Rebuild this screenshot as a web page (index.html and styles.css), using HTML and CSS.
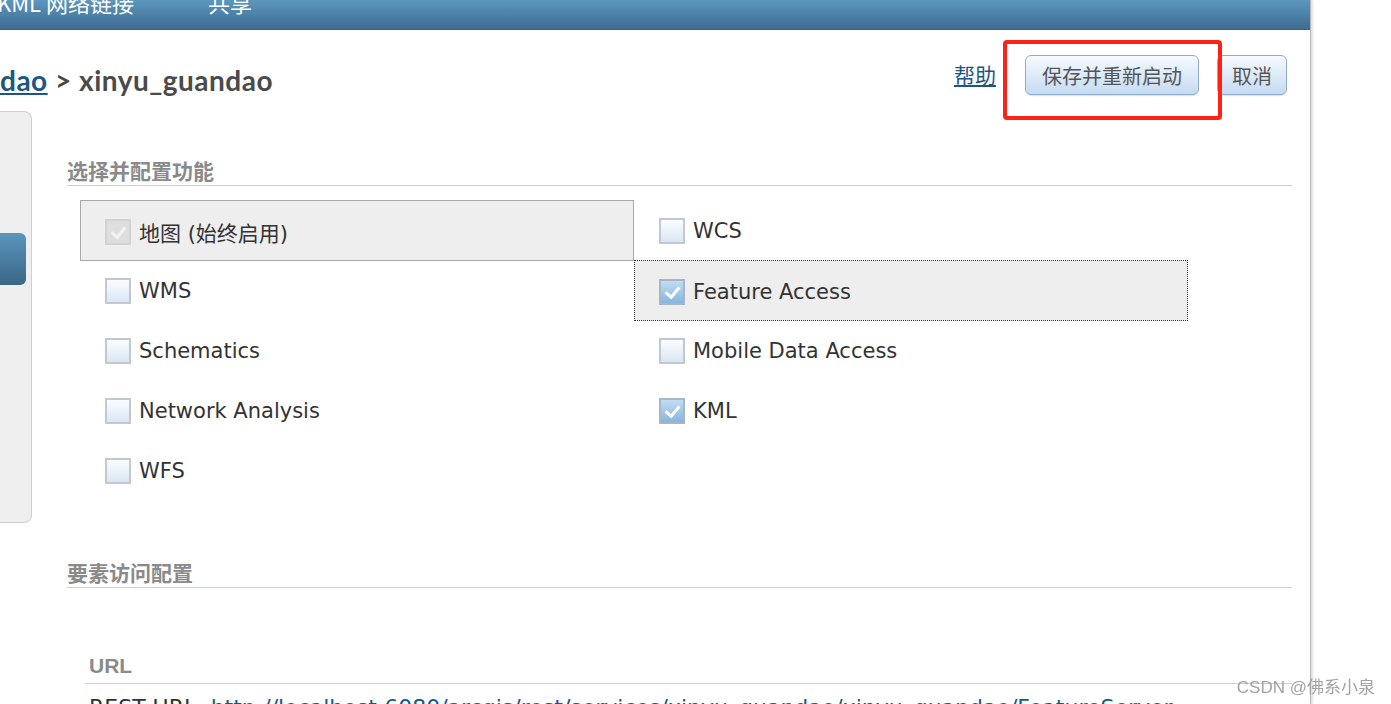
FILE: index.html
```html
<!DOCTYPE html>
<html lang="zh-CN">
<head>
  <meta charset="UTF-8" />
  <title>xinyu_guandao - 功能</title>
  <meta name="viewport" content="width=device-width, initial-scale=1.0" />
  <link rel="stylesheet" href="styles.css">
</head>
<body>
  <div class="page">
    <div class="topbar">
      <a href="#" class="tab">KML 网络链接</a>
      <a href="#" class="tab">共享</a>
    </div>

    <div class="titlebar">
      <h1 class="crumbs"><a href="#">dao</a> &gt; xinyu_guandao</h1>
      <div class="actions">
        <a href="#" class="help">帮助</a>
        <span class="save-wrap">
          <button class="btn">保存并重新启动</button>
          <span class="mark"></span>
        </span>
        <button class="btn">取消</button>
      </div>
    </div>

    <div class="body">
      <div class="sidebar">
        <div class="side-tab"></div>
      </div>

      <div class="content">
        <h3 class="section-title">选择并配置功能</h3>
        <div class="features">
          <label class="cell locked"><input type="checkbox" checked disabled> 地图 (始终启用)</label>
          <label class="cell"><input type="checkbox"> WCS</label>
          <label class="cell"><input type="checkbox"> WMS</label>
          <label class="cell focused"><input type="checkbox" checked> Feature Access</label>
          <label class="cell"><input type="checkbox"> Schematics</label>
          <label class="cell"><input type="checkbox"> Mobile Data Access</label>
          <label class="cell"><input type="checkbox"> Network Analysis</label>
          <label class="cell"><input type="checkbox" checked> KML</label>
          <label class="cell"><input type="checkbox"> WFS</label>
        </div>

        <h3 class="section-title second">要素访问配置</h3>

        <div class="url-block">
          <h4>URL</h4>
          <p>REST URL: <a href="#">http://localhost:6080/arcgis/rest/services/xinyu_guandao/xinyu_guandao/FeatureServer</a></p>
        </div>
      </div>
    </div>
  </div>

  <div class="watermark">CSDN @佛系小泉</div>
</body>
</html>
```

FILE: styles.css
```css
* {
  box-sizing: border-box;
  margin: 0;
  padding: 0;
}

body {
  background: #fff;
  font-family: "DejaVu Sans", "Noto Sans CJK SC", sans-serif;
  color: #333;
  height: 704px;
  overflow: hidden;
}

.page {
  width: 1311px;
  height: 704px;
  border-right: 1px solid #b4b4b4;
  box-shadow: 2px 0 2px #e2e2e2;
  overflow: hidden;
}

/* top navigation bar */
.topbar {
  height: 30px;
  background: linear-gradient(to bottom, #5c96bd, #3f6c90);
  border-bottom: 1px solid #365f80;
  display: flex;
  gap: 74px;
  overflow: hidden;
}

.topbar .tab {
  color: #fff;
  text-decoration: none;
  font-family: "Noto Sans CJK SC", sans-serif;
  font-size: 22px;
  line-height: 22px;
  margin-top: -9px;
}

.topbar .tab:first-child {
  margin-left: -3px;
}

/* title + buttons */
.titlebar {
  height: 81px;
  display: flex;
  justify-content: space-between;
  align-items: flex-start;
  padding-right: 23px;
}

.crumbs {
  font-family: Lato, "Noto Sans CJK SC", sans-serif;
  font-weight: 700;
  font-size: 28px;
  color: #4a4a4a;
  margin-top: 33px;
  line-height: 34px;
  letter-spacing: 0.5px;
}

.crumbs a {
  color: #1c5684;
}

.actions {
  display: flex;
  align-items: center;
  margin-top: 25px;
}

.help {
  font-family: "Noto Sans CJK SC", sans-serif;
  font-size: 21px;
  color: #1c5684;
  margin-right: 29px;
  margin-top: -2px;
}

.save-wrap {
  position: relative;
  margin-right: 18px;
}

.btn {
  height: 40px;
  padding: 0 14px;
  font-family: "Noto Sans CJK SC", sans-serif;
  font-size: 20px;
  color: #555;
  background: linear-gradient(to bottom, #f6faff, #c5dbf2);
  border: 1px solid #8eadcc;
  border-radius: 6px;
  box-shadow: 0 1px 1px rgba(0,0,0,0.12);
  cursor: pointer;
}

.save-wrap .btn {
  padding: 0 16px;
}

/* red annotation box around the save button */
.mark {
  position: absolute;
  left: -22px;
  top: -15px;
  width: 219px;
  height: 80px;
  border: 4px solid #fe2118;
  border-radius: 4px;
  pointer-events: none;
}

/* main area */
.body {
  display: flex;
}

.sidebar {
  width: 32px;
  height: 412px;
  flex-shrink: 0;
  background: #efefef;
  border: 1px solid #cfcfcf;
  border-left: none;
  border-radius: 0 8px 8px 0;
  padding-top: 121px;
}

.side-tab {
  width: 26px;
  height: 52px;
  background: linear-gradient(to bottom, #5b95bc, #3a6787);
  border-radius: 0 6px 6px 0;
}

.content {
  flex: 1;
  margin-left: 35px;
  margin-right: 18px;
}

.section-title {
  font-family: "Noto Sans CJK SC", sans-serif;
  font-weight: 700;
  font-size: 21px;
  line-height: 24px;
  color: #8a8a8a;
  border-bottom: 1px solid #cfcfcf;
  padding-bottom: 3px;
  margin-top: 47px;
}

.section-title.second {
  margin-top: 60px;
}

.features {
  display: grid;
  grid-template-columns: 554px 554px;
  grid-auto-rows: 60px;
  margin: 14px 0 0 13px;
}

.features .cell {
  display: flex;
  align-items: center;
  gap: 8px;
  padding-left: 24px;
  padding-top: 2px;
  font-size: 21px;
  color: #333;
  border: 1px solid transparent;
}

.features .cell.locked {
  background: #eee;
  border-color: #a9a9a9;
  height: 61px;
}

.features .cell.focused {
  background: #eee;
  border: 1px dotted #333;
  height: 61px;
}

.cell input {
  appearance: none;
  width: 26px;
  height: 26px;
  border: 2px solid #c2c8d2;
  background: linear-gradient(to bottom, #fbfdff, #d9e6f3);
  position: relative;
  flex-shrink: 0;
}

.cell input:checked {
  background: linear-gradient(to bottom, #c2dcf1, #86b6de);
  border-color: #a7b5c6;
}

.cell input:checked::after {
  content: "";
  position: absolute;
  left: 7px;
  top: 3px;
  width: 6px;
  height: 11px;
  border: solid #fff;
  border-width: 0 3px 3px 0;
  transform: rotate(40deg);
}

.cell input:disabled {
  background: #dedede;
  border-color: #d3d3d3;
}

.cell input:disabled::after {
  border-color: #f3f3f3;
}

.url-block {
  margin: 64px 0 0 18px;
}

.url-block h4 {
  font-family: "Liberation Sans", sans-serif;
  font-weight: 700;
  font-size: 21px;
  line-height: 27px;
  color: #8a8a8a;
  padding-left: 4px;
  padding-bottom: 4px;
  border-bottom: 1px solid #cfcfcf;
}

.url-block p {
  font-size: 22px;
  padding: 11px 0 0 4px;
  white-space: nowrap;
}

.url-block a {
  color: #1c5684;
  text-decoration: none;
}

.watermark {
  position: fixed;
  right: 16px;
  bottom: 6px;
  font-family: "Liberation Sans", "Noto Sans CJK SC", sans-serif;
  font-size: 17px;
  color: #a3a3a3;
}
```
